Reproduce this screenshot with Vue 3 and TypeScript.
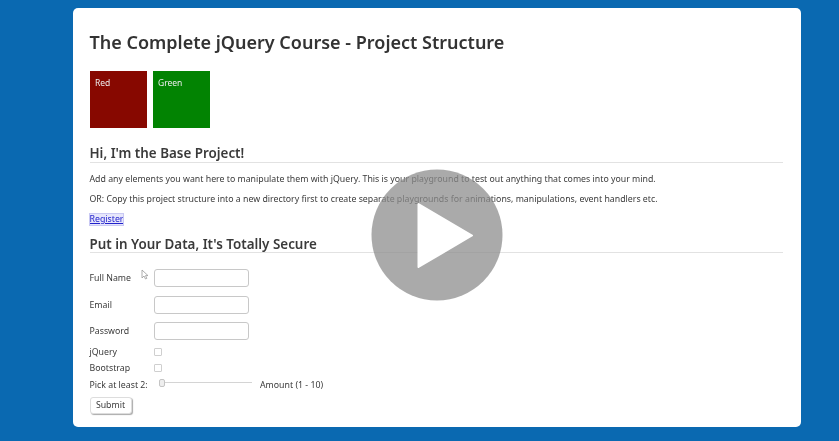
<script setup lang="ts">
const fields: { label: string; type: string }[] = [
  { label: 'Full Name', type: 'text' },
  { label: 'Email', type: 'email' },
  { label: 'Password', type: 'password' },
]
const checks: string[] = ['jQuery', 'Bootstrap']
</script>

<template>
  <div class="stage">
    <main class="card">
      <h1>The Complete jQuery Course - Project Structure</h1>
      <div class="boxes">
        <div class="box red">Red</div>
        <div class="box green">Green</div>
      </div>
      <h2 class="first">Hi, I'm the Base Project!</h2>
      <p>Add any elements you want here to manipulate them with jQuery. This is your playground to test out anything that comes into your mind.</p>
      <p>OR: Copy this project structure into a new directory first to create separate playgrounds for animations, manipulations, event handlers etc.</p>
      <a class="link" href="#">Register</a>
      <h2 class="second">Put in Your Data, It's Totally Secure</h2>
      <form class="form" @submit.prevent>
        <div class="inputs">
          <label v-for="f in fields" :key="f.label" class="row">
            <span class="lab">{{ f.label }}</span>
            <input class="text" :type="f.type" />
          </label>
        </div>
        <label v-for="c in checks" :key="c" class="row check-row">
          <span class="lab">{{ c }}</span>
          <span class="check"></span>
        </label>
        <div class="row range-row">
          <span class="lab pick">Pick at least 2:</span>
          <span class="slider"><span class="thumb"></span></span>
          <span class="amount">Amount (1 - 10)</span>
        </div>
        <button class="submit" type="submit">Submit</button>
      </form>
    </main>
    <svg class="cursor" width="8" height="11" viewBox="0 0 8 11">
      <path d="M1 1v8l2-2 1.500 3 1.300-.6L4.500 6.600H7z" fill="#fff" stroke="#999" stroke-width=".8" />
    </svg>
    <svg class="play" width="132" height="132" viewBox="0 0 132 132">
      <circle cx="66" cy="66" r="65.500" fill="#8c8c8c" fill-opacity=".74" />
      <path d="M47.500 35 101 66.500 47.500 98z" fill="#fff" stroke="#fff" stroke-width="2" stroke-linejoin="round" />
    </svg>
  </div>
</template>

<style>
html, body { margin: 0; padding: 0; }
</style>

<style scoped>
.stage {
  position: relative;
  width: 839px;
  height: 441px;
  background: #0a69b1;
  overflow: hidden;
  padding: 8px 38px 14px 72.500px;
  box-sizing: border-box;
  font-family: "Noto Sans", Tahoma, sans-serif;
  color: #333;
}
.card {
  height: 100%;
  box-sizing: border-box;
  background: #fff;
  border-radius: 5px;
  padding: 22px 18px 0 17px;
  filter: blur(0.4px);
}
h1 {
  margin: 0;
  font-size: 18px;
  line-height: 24px;
  font-weight: 600;
  color: #333;
}
.boxes { display: flex; gap: 6px; margin-top: 17px; }
.box {
  width: 57px;
  height: 57px;
  box-sizing: border-box;
  padding: 6px 5.500px;
  font-size: 8.500px;
  line-height: 11px;
  color: #eee;
}
.red { background: #870800; }
.green { background: #028302; }
h2 {
  margin: 0;
  font-size: 13.400px;
  line-height: 17px;
  font-weight: 600;
  color: #3a3a3a;
  border-bottom: 1px solid #e2e2e2;
}
h2.first { margin-top: 17px; }
h2.second { margin-top: 9px; line-height: 16px; }
p {
  margin: 0;
  font-size: 8.770px;
  line-height: 12px;
  color: #3a3a3a;
}
h2.first + p { margin-top: 10px; }
p + p { margin-top: 8px; }
.link {
  display: inline-block;
  margin-top: 9px;
  font-size: 8.770px;
  line-height: 11px;
  color: #2222cc;
  text-decoration: underline;
  background: #e6e6fb;
  outline: 1px solid #c9c9f3;
}
.form { display: flex; flex-direction: column; margin-top: 16px; }
.inputs { display: flex; flex-direction: column; gap: 8.500px; margin-bottom: 3.500px; }
.row { display: flex; align-items: center; font-size: 8.770px; color: #3a3a3a; }
.lab { width: 64.500px; flex: none; }
.text {
  width: 95px;
  height: 18px;
  box-sizing: border-box;
  margin: 0;
  padding: 0;
  border: 1px solid #c8c8c8;
  border-radius: 3px;
  background: #fff;
}
.check-row { height: 16.500px; }
.check {
  width: 6px;
  height: 6px;
  border: 1px solid #cfcfcf;
  border-radius: 1px;
}
.range-row { height: 17px; }
.pick { width: 69.500px; }
.slider {
  position: relative;
  width: 93px;
  height: 1px;
  background: #d4d4d4;
  margin-bottom: 5px;
}
.thumb {
  position: absolute;
  left: 0;
  top: -3px;
  width: 4px;
  height: 6px;
  border: 1px solid #c4c4c4;
  border-radius: 2px;
  background: #eee;
}
.amount { margin-left: 8px; }
.submit {
  align-self: flex-start;
  margin-top: 3px;
  width: 42px;
  height: 17px;
  padding: 0;
  background: #fff;
  border: 1px solid #ddd;
  border-radius: 3px;
  box-shadow: 1px 1px 1px #aaa;
  font: 8.770px "Noto Sans", Tahoma, sans-serif;
  color: #3a3a3a;
}
.cursor { position: absolute; left: 141px; top: 269px; }
.play { position: absolute; left: 370.500px; top: 169px; }
</style>
